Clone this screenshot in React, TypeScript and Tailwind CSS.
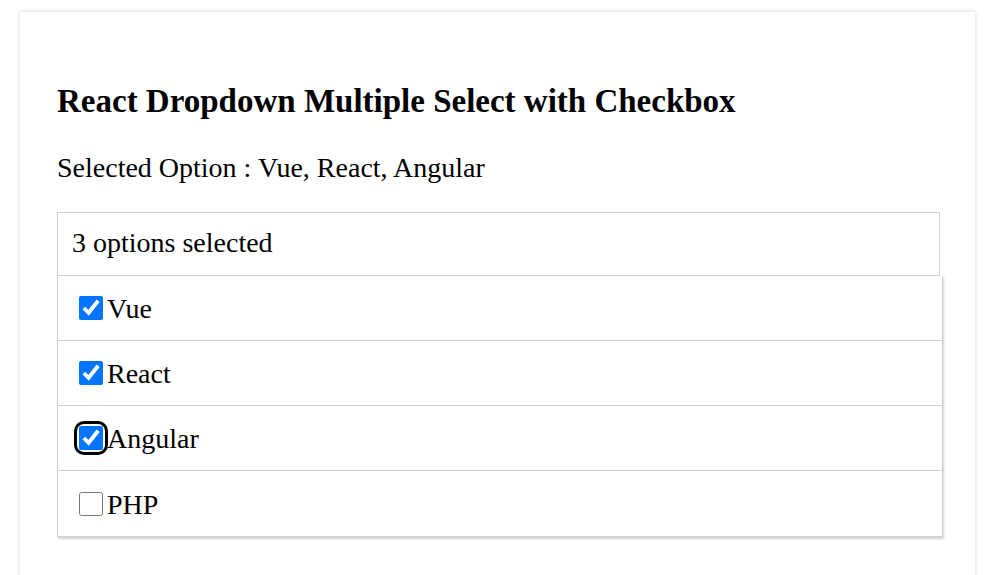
import React, { useState } from 'react';

const OPTIONS = ['Vue', 'React', 'Angular', 'PHP'];

const App: React.FC = () => {
  const [selected, setSelected] = useState<string[]>(['Vue', 'React', 'Angular']);

  const toggle = (opt: string) =>
    setSelected((cur) => (cur.includes(opt) ? cur.filter((o) => o !== opt) : [...cur, opt]));

  return (
    <div className="min-h-screen bg-white font-['Liberation_Serif',serif] text-black">
      <div className="ml-[20px] mt-[12px] w-[955px] h-[600px] bg-white shadow-[0_0_4px_rgba(0,0,0,0.18)] pl-[37px] pr-[35px] pt-[70px]">
        <h3 className="text-[33px] leading-[38px] font-bold whitespace-nowrap">React Dropdown Multiple Select with Checkbox</h3>
        <p className="mt-[32px] text-[28px] leading-[32px]">Selected Option : {selected.join(', ')}</p>

        <div className="mt-[28px] w-[883px]">
          <div className="border border-[#d0d0d0] h-[64px] pl-[14px] flex items-center text-[28px] leading-[32px] pb-[2px]">
            {selected.length} options selected
          </div>
          <div className="w-[886px] border-x border-b border-[#d0d0d0] shadow-[1px_2px_2px_rgba(0,0,0,0.18)]">
            {OPTIONS.map((opt, i) => (
              <label
                key={opt}
                className={`flex items-center h-[65px] pl-[21px] text-[28px] leading-[32px] ${
                  i < OPTIONS.length - 1 ? 'border-b border-[#d0d0d0]' : ''
                }`}
              >
                <span
                  className={`inline-flex ${
                    opt === 'Angular' ? 'rounded-[5px] outline-[3px] outline-solid outline-black outline-offset-[2px]' : ''
                  }`}
                >
                  <input
                    type="checkbox"
                    checked={selected.includes(opt)}
                    onChange={() => toggle(opt)}
                    className="m-0 w-[24px] h-[24px] accent-[#0075ff]"
                  />
                </span>
                <span className="ml-[4px] pt-[2px]">{opt}</span>
              </label>
            ))}
          </div>
        </div>
      </div>
    </div>
  );
};

export default App;
